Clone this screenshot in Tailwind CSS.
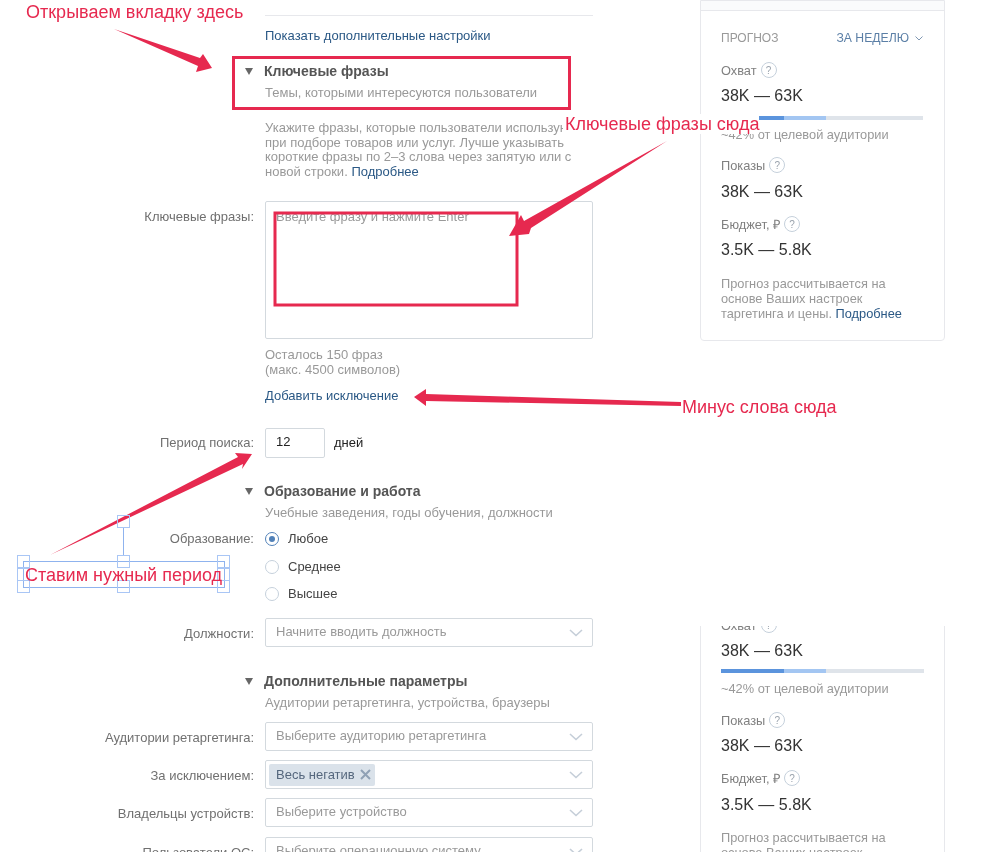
<!DOCTYPE html>
<html lang="ru">
<head>
    <meta charset="UTF-8">
    <meta name="viewport" content="width=device-width, initial-scale=1.0">
    <title>Ключевые фразы</title>
    <script src="https://cdn.jsdelivr.net/npm/@tailwindcss/browser@4"></script>
</head>
<body class="bg-white font-['Liberation_Sans',Arial,sans-serif] text-[13px] leading-[15px] text-[#707070]">

<div class="relative w-[996px] h-[852px] overflow-hidden blur-[0.35px]">
    <div class="flex h-full">

        <!-- Form column -->
        <div class="w-[593px] shrink-0 pt-[15px]">
            <div class="ml-[265px] h-px bg-[#e7e8ec]"></div>
            <div class="ml-[265px] mt-[12px] h-[15px] text-[#2a5885]">Показать дополнительные настройки</div>

            <!-- Ключевые фразы -->
            <div class="flex mt-[20px] h-[16px]">
                <div class="w-[254px] flex justify-end items-center pr-[1px]"><span class="border-x-[4px] border-x-transparent border-t-[7px] border-t-[#666]"></span></div>
                <div class="ml-[10px] text-[14px] leading-[16px] font-bold text-[#555]">Ключевые фразы</div>
            </div>
            <div class="ml-[265px] mt-[6px] text-[#999]">Темы, которыми интересуются пользователи</div>
            <div class="ml-[265px] mt-[21px] w-[320px] h-[58px] leading-[14.5px] text-[#999]">Укажите фразы, которые пользователи используют при подборе товаров или услуг. Лучше указывать короткие фразы по 2–3 слова через запятую или с новой строки. <span class="text-[#2a5885]">Подробнее</span></div>

            <div class="flex mt-[22px]">
                <div class="w-[254px] pt-[8px] text-right">Ключевые фразы:</div>
                <div class="ml-[11px] w-[328px] h-[138px] border border-[#d3d9de] rounded-[2px] px-[10px] pt-[7px] text-[#999]">Введите фразу и нажмите Enter</div>
            </div>
            <div class="ml-[265px] mt-[9px] leading-[14.5px] text-[#999]">Осталось 150 фраз<br>(макс. 4500 символов)</div>
            <div class="ml-[265px] mt-[11px] text-[#2a5885]">Добавить исключение</div>

            <div class="flex mt-[25px] items-center h-[30px]">
                <div class="w-[254px] -mt-[2px] text-right">Период поиска:</div>
                <div class="ml-[11px] w-[60px] h-[30px] border border-[#d3d9de] rounded-[2px] pl-[10px] pt-[5px] text-[#222]">12</div>
                <div class="ml-[9px] -mt-[2px] text-[#222]">дней</div>
            </div>

            <!-- Образование и работа -->
            <div class="flex mt-[25px] h-[16px]">
                <div class="w-[254px] flex justify-end items-center pr-[1px]"><span class="border-x-[4px] border-x-transparent border-t-[7px] border-t-[#666]"></span></div>
                <div class="ml-[10px] text-[14px] leading-[16px] font-bold text-[#555]">Образование и работа</div>
            </div>
            <div class="ml-[265px] mt-[6px] text-[#999]">Учебные заведения, годы обучения, должности</div>

            <div class="flex mt-[11px] items-center h-[15px]">
                <div class="w-[254px] text-right">Образование:</div>
                <span class="ml-[11px] w-[14px] h-[14px] rounded-full border border-[#5181b8] flex items-center justify-center"><span class="w-[6px] h-[6px] rounded-full bg-[#5181b8]"></span></span>
                <span class="ml-[9px] text-[#444]">Любое</span>
            </div>
            <div class="flex mt-[13px] items-center h-[15px]">
                <div class="w-[254px]"></div>
                <span class="ml-[11px] w-[14px] h-[14px] rounded-full border border-[#c5d0db]"></span>
                <span class="ml-[9px] text-[#444]">Среднее</span>
            </div>
            <div class="flex mt-[12px] items-center h-[15px]">
                <div class="w-[254px]"></div>
                <span class="ml-[11px] w-[14px] h-[14px] rounded-full border border-[#c5d0db]"></span>
                <span class="ml-[9px] text-[#444]">Высшее</span>
            </div>

            <div class="flex mt-[17px]">
                <div class="w-[254px] pt-[8px] text-right">Должности:</div>
                <div class="ml-[11px] w-[328px] h-[29px] border border-[#d3d9de] rounded-[2px] pl-[10px] pr-[9px] flex items-center justify-between text-[#999]">
                    <span class="-mt-[3px]">Начните вводить должность</span>
                    <svg width="14" height="8" viewBox="0 0 14 8" fill="none" stroke="#c5ced8" stroke-width="1.6"><path d="M1 1l6 5.500L13 1"/></svg>
                </div>
            </div>

            <!-- Дополнительные параметры -->
            <div class="flex mt-[26px] h-[16px]">
                <div class="w-[254px] flex justify-end items-center pr-[1px]"><span class="border-x-[4px] border-x-transparent border-t-[7px] border-t-[#666]"></span></div>
                <div class="ml-[10px] text-[14px] leading-[16px] font-bold text-[#555]">Дополнительные параметры</div>
            </div>
            <div class="ml-[265px] mt-[6px] text-[#999]">Аудитории ретаргетинга, устройства, браузеры</div>

            <div class="flex mt-[12px]">
                <div class="w-[254px] pt-[8px] text-right">Аудитории ретаргетинга:</div>
                <div class="ml-[11px] w-[328px] h-[29px] border border-[#d3d9de] rounded-[2px] pl-[10px] pr-[9px] flex items-center justify-between text-[#999]">
                    <span class="-mt-[3px]">Выберите аудиторию ретаргетинга</span>
                    <svg width="14" height="8" viewBox="0 0 14 8" fill="none" stroke="#c5ced8" stroke-width="1.6"><path d="M1 1l6 5.500L13 1"/></svg>
                </div>
            </div>
            <div class="flex mt-[9px]">
                <div class="w-[254px] pt-[8px] text-right">За исключением:</div>
                <div class="ml-[11px] w-[328px] h-[29px] border border-[#d3d9de] rounded-[2px] pl-[3px] pr-[9px] flex items-center justify-between text-[#999]">
                    <span class="h-[22px] bg-[#dae2ea] rounded-[2px] pl-[7px] pr-[4px] flex items-center gap-[5px] text-[#55677d]">Весь негатив
                        <svg width="11" height="11" viewBox="0 0 11 11" fill="none" stroke="#8fa1b5" stroke-width="2"><path d="M1 1l9 9M10 1l-9 9"/></svg>
                    </span>
                    <svg width="14" height="8" viewBox="0 0 14 8" fill="none" stroke="#c5ced8" stroke-width="1.6"><path d="M1 1l6 5.500L13 1"/></svg>
                </div>
            </div>
            <div class="flex mt-[9px]">
                <div class="w-[254px] pt-[8px] text-right">Владельцы устройств:</div>
                <div class="ml-[11px] w-[328px] h-[29px] border border-[#d3d9de] rounded-[2px] pl-[10px] pr-[9px] flex items-center justify-between text-[#999]">
                    <span class="-mt-[3px]">Выберите устройство</span>
                    <svg width="14" height="8" viewBox="0 0 14 8" fill="none" stroke="#c5ced8" stroke-width="1.6"><path d="M1 1l6 5.500L13 1"/></svg>
                </div>
            </div>
            <div class="flex mt-[10px]">
                <div class="w-[254px] pt-[8px] text-right">Пользователи ОС:</div>
                <div class="ml-[11px] w-[328px] h-[29px] border border-[#d3d9de] rounded-[2px] pl-[10px] pr-[9px] flex items-center justify-between text-[#999]">
                    <span class="-mt-[3px]">Выберите операционную систему</span>
                    <svg width="14" height="8" viewBox="0 0 14 8" fill="none" stroke="#c5ced8" stroke-width="1.6"><path d="M1 1l6 5.500L13 1"/></svg>
                </div>
            </div>
        </div>

        <!-- Forecast column -->
        <div class="ml-[107px] w-[245px] shrink-0 text-[12.8px]">
            <div class="h-[341px] border border-[#e7e8ec] rounded-b-[4px] overflow-hidden">
                <div class="h-[10px] bg-[#fafbfc] border-b border-[#e7e8ec]"></div>
                <div class="pl-[20px] pr-[21px] pt-[20px]">
                    <div class="flex justify-between items-center h-[15px]">
                        <span class="text-[#999] text-[12px]">ПРОГНОЗ</span>
                        <span class="flex items-center gap-[6px] text-[#5b7fa6] text-[12.2px]">ЗА НЕДЕЛЮ
                            <svg width="8" height="5" viewBox="0 0 8 5" fill="none" stroke="#7f97b2" stroke-width="1"><path d="M.5.5L4 4 7.500.5"/></svg>
                        </span>
                    </div>
                    <div class="mt-[16px] flex items-center gap-[4px] h-[16px] text-[#808080]">Охват
                        <span class="w-[16px] h-[16px] rounded-full border border-[#c5d0db] flex items-center justify-center text-[10px] text-[#9aa3ad]">?</span>
                    </div>
                    <div class="mt-[8px] h-[20px] text-[16px] leading-[20px] text-[#333]">38K — 63K</div>
                    <div class="mt-[10px] h-[4px] flex bg-[#dfe4ea]"><span class="w-[63px] bg-[#5b94dd]"></span><span class="w-[42px] bg-[#a3c6f2]"></span></div>
                    <div class="mt-[7px] text-[#999]">~42% от целевой аудитории</div>
                    <div class="mt-[15px] flex items-center gap-[4px] h-[16px] text-[#808080]">Показы
                        <span class="w-[16px] h-[16px] rounded-full border border-[#c5d0db] flex items-center justify-center text-[10px] text-[#9aa3ad]">?</span>
                    </div>
                    <div class="mt-[9px] h-[20px] text-[16px] leading-[20px] text-[#333]">38K — 63K</div>
                    <div class="mt-[14px] flex items-center gap-[4px] h-[16px] text-[#808080]">Бюджет, ₽
                        <span class="w-[16px] h-[16px] rounded-full border border-[#c5d0db] flex items-center justify-center text-[10px] text-[#9aa3ad]">?</span>
                    </div>
                    <div class="mt-[8px] h-[20px] text-[16px] leading-[20px] text-[#333]">3.5K — 5.8K</div>
                    <div class="mt-[16px] leading-[15px] text-[#999]">Прогноз рассчитывается на основе Ваших настроек таргетинга и цены. <span class="text-[#2a5885]">Подробнее</span></div>
                </div>
            </div>

            <!-- Same card, cut off by the screenshot splice -->
            <div class="mt-[285px] h-[226px] border-x border-[#e7e8ec] overflow-hidden">
                <div class="px-[20px] -mt-[9px]">
                    <div class="flex items-center gap-[4px] h-[16px] text-[#808080]">Охват
                        <span class="w-[16px] h-[16px] rounded-full border border-[#c5d0db] flex items-center justify-center text-[10px] text-[#9aa3ad]">?</span>
                    </div>
                    <div class="mt-[8px] h-[20px] text-[16px] leading-[20px] text-[#333]">38K — 63K</div>
                    <div class="mt-[8px] h-[4px] flex bg-[#dfe4ea]"><span class="w-[63px] bg-[#5b94dd]"></span><span class="w-[42px] bg-[#a3c6f2]"></span></div>
                    <div class="mt-[8px] text-[#999]">~42% от целевой аудитории</div>
                    <div class="mt-[16px] flex items-center gap-[4px] h-[16px] text-[#808080]">Показы
                        <span class="w-[16px] h-[16px] rounded-full border border-[#c5d0db] flex items-center justify-center text-[10px] text-[#9aa3ad]">?</span>
                    </div>
                    <div class="mt-[8px] h-[20px] text-[16px] leading-[20px] text-[#333]">38K — 63K</div>
                    <div class="mt-[14px] flex items-center gap-[4px] h-[16px] text-[#808080]">Бюджет, ₽
                        <span class="w-[16px] h-[16px] rounded-full border border-[#c5d0db] flex items-center justify-center text-[10px] text-[#9aa3ad]">?</span>
                    </div>
                    <div class="mt-[9px] h-[20px] text-[16px] leading-[20px] text-[#333]">3.5K — 5.8K</div>
                    <div class="mt-[15px] leading-[15px] text-[#999]">Прогноз рассчитывается на основе Ваших настроек таргетинга и цены. <span class="text-[#2a5885]">Подробнее</span></div>
                </div>
            </div>
        </div>
    </div>

    <!-- Annotations drawn over the screenshot -->
    <svg class="absolute inset-0" width="996" height="852" viewBox="0 0 996 852" fill="none">
        <rect x="233.500" y="57.500" width="336" height="51" stroke="#e6294f" stroke-width="3"/>
        <rect x="275" y="213" width="242" height="92" stroke="#e6294f" stroke-width="3"/>
        <g fill="#e6294f">
            <path d="M114 29L200 58 203 54 212 68 196 72 198 66Z"/>
            <path d="M667 141L524 221 521 215 509 236 529 234 531 228Z"/>
            <path d="M681 402L426 394 426 389 414 397 426 406 426 401 681 406Z"/>
            <path d="M50 555L238 457 235 453 252 454 242 469 243 464Z"/>
        </g>
        <g stroke="#8fb3ee" stroke-width="1">
            <rect x="23.500" y="561.500" width="201" height="26"/>
            <path d="M123.500 527V555M17 567.500H30M17 580.500H30M217 567.500H230M217 580.500H230"/>
        </g>
        <g stroke="#a9c6f5" stroke-width="1">
            <rect x="117.500" y="515.500" width="12" height="12"/>
            <rect x="117.500" y="555.500" width="12" height="12"/>
            <rect x="117.500" y="580.500" width="12" height="12"/>
            <rect x="17.500" y="555.500" width="12" height="12"/>
            <rect x="17.500" y="568.500" width="12" height="12"/>
            <rect x="17.500" y="580.500" width="12" height="12"/>
            <rect x="217.500" y="555.500" width="12" height="12"/>
            <rect x="217.500" y="568.500" width="12" height="12"/>
            <rect x="217.500" y="580.500" width="12" height="12"/>
        </g>
    </svg>
    <div class="absolute left-[26px] top-[2px] text-[18px] leading-[20px] text-[#e6294f]">Открываем вкладку здесь</div>
    <div class="absolute left-[563px] top-[114px] pl-[2px] bg-white text-[18px] leading-[20px] text-[#e6294f]">Ключевые фразы сюда</div>
    <div class="absolute left-[682px] top-[397px] text-[18px] leading-[20px] text-[#e6294f]">Минус слова сюда</div>
    <div class="absolute left-[25px] top-[565px] text-[18px] leading-[20px] text-[#e6294f]">Ставим нужный период</div>
</div>

</body>
</html>
